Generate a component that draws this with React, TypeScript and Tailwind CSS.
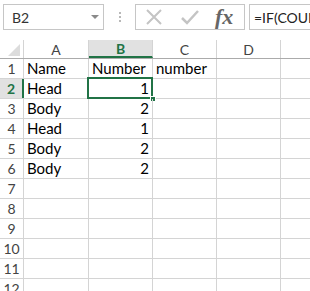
import React from "react";

const cols = ["A", "B", "C", "D", ""];
const widths = ["w-[65px]", "w-[64px]", "w-[64px]", "w-[64px]", "w-[30px]"];

const data: Record<number, [string, string, string]> = {
  1: ["Name", "Number", "number"],
  2: ["Head", "1", ""],
  3: ["Body", "2", ""],
  4: ["Head", "1", ""],
  5: ["Body", "2", ""],
  6: ["Body", "2", ""],
};

const FormulaBar = () => (
  <div className="flex items-center h-[40px] pb-[10px] pt-[4px] pl-[3px] bg-white">
    <div className="flex items-center justify-between w-[101px] h-[26px] border border-[#c6c6c6] pl-[8px] pr-[4px]">
      <span className="text-[14px] text-[#333]">B2</span>
      <svg width="8" height="4" viewBox="0 0 8 4">
        <path d="M0 0 L8 0 L4 4 Z" fill="#8a8a8a" />
      </svg>
    </div>
    <div className="w-[31px] flex flex-col items-center gap-[2px]">
      <div className="w-[2px] h-[2px] bg-[#b8b8b8]" />
      <div className="w-[2px] h-[2px] bg-[#b8b8b8]" />
      <div className="w-[2px] h-[2px] bg-[#b8b8b8]" />
    </div>
    <div className="flex items-center w-[110px] h-[26px] border border-[#c6c6c6]">
      <svg width="18" height="16" viewBox="0 0 18 16" className="ml-[9px]">
        <path d="M2 1 L16 15 M16 1 L2 15" stroke="#c4c4c4" strokeWidth="2" />
      </svg>
      <svg width="18" height="16" viewBox="0 0 18 16" className="ml-[18px]">
        <path d="M1 9 L6 14 L17 2" stroke="#c4c4c4" strokeWidth="2.5" fill="none" />
      </svg>
      <span
        className="ml-[16px] text-[22px] leading-none italic font-bold text-[#666]"
        style={{ fontFamily: '"Liberation Serif", serif' }}
      >
        fx
      </span>
    </div>
    <div className="flex-1 h-[26px] ml-[4px] border border-r-0 border-[#c6c6c6] pl-[4px] flex items-center overflow-hidden">
      <span className="text-[14px] text-[#222] whitespace-nowrap">=IF(COUNTIF(</span>
    </div>
  </div>
);

const Cell = ({ row, col, value }: { row: number; col: number; value: string }) => {
  const numeric = /^\d+$/.test(value);
  const selected = row === 2 && col === 1;
  return (
    <div
      className={`relative ${widths[col]} h-full shrink-0 border-r border-[#d4d4d4] flex items-center px-[3px] ${
        numeric ? "justify-end" : "justify-start"
      }`}
    >
      <span className="text-[15px] text-black whitespace-nowrap">{value}</span>
      {selected && (
        <>
          <div className="absolute -left-[2px] -top-[2px] -right-[1px] -bottom-[1px] border-2 border-[#217346]" />
          <div className="absolute -right-[4px] -bottom-[4px] w-[6px] h-[6px] bg-[#217346] border border-white" />
        </>
      )}
    </div>
  );
};

const App = () => {
  const rows = Array.from({ length: 12 }, (_, i) => i + 1);
  return (
    <div
      className="w-[310px] h-[291px] bg-white overflow-hidden"
      style={{ fontFamily: 'Lato, "Liberation Sans", sans-serif' }}
    >
      <FormulaBar />

      <div className="flex flex-col">
        {/* column headers */}
        <div className="flex h-[19px] border-b border-[#ababab]">
          <div className="w-[24px] shrink-0 border-r border-[#d4d4d4] flex items-end justify-end pr-[3px] pb-[2px]">
            <svg width="12" height="12" viewBox="0 0 12 12">
              <path d="M12 0 L12 12 L0 12 Z" fill="#dcdcdc" />
            </svg>
          </div>
          {cols.map((c, i) => (
            <div
              key={i}
              className={`${widths[i]} shrink-0 border-r border-[#d4d4d4] flex items-center justify-center text-[14px] ${
                c === "B"
                  ? "bg-[#e1e1e1] text-[#217346] font-bold border-b-2 border-b-[#217346]"
                  : "text-[#444]"
              }`}
            >
              {c}
            </div>
          ))}
        </div>

        {rows.map((r) => (
          <div key={r} className="flex h-[20px] border-b border-[#d4d4d4]">
            <div
              className={`w-[24px] shrink-0 flex items-center justify-center text-[14px] ${
                r === 2
                  ? "bg-[#e1e1e1] text-[#217346] font-bold border-r-2 border-[#217346]"
                  : "text-[#444] border-r border-[#d4d4d4]"
              }`}
            >
              {r}
            </div>
            {cols.map((c, i) => (
              <Cell key={i} row={r} col={i} value={i < 3 && data[r] ? data[r][i] : ""} />
            ))}
          </div>
        ))}
      </div>
    </div>
  );
};

export default App;
